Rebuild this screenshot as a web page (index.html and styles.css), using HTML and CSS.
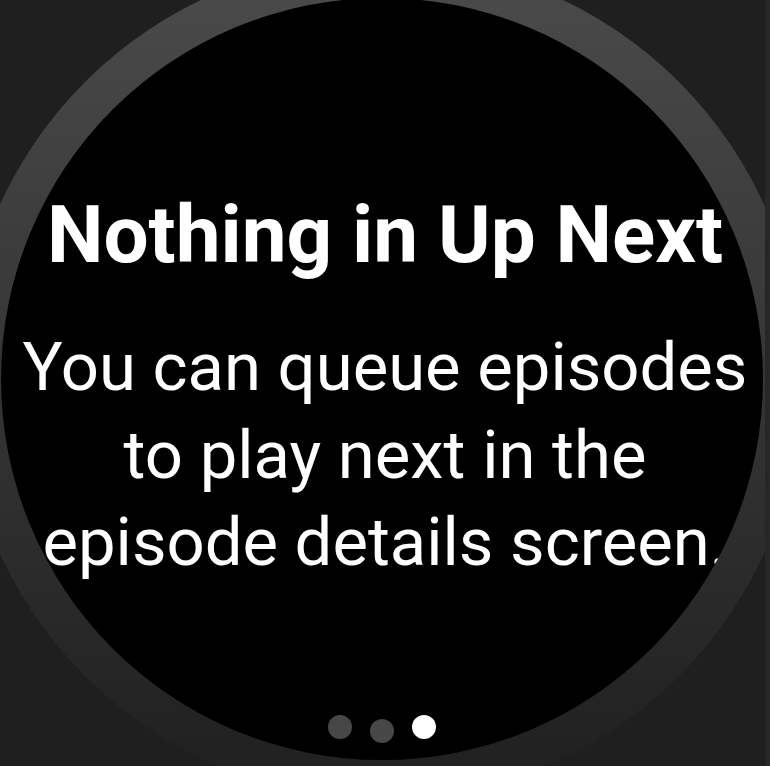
FILE: index.html
```html
<!DOCTYPE html>
<html lang="en">
<head>
<meta charset="utf-8">
<title>Up Next</title>
<link rel="stylesheet" href="styles.css">
</head>
<body>
<div class="stage">
  <div class="bezel">
    <div class="screen">
      <h1 class="title">Nothing in Up Next</h1>
      <p class="message">You can queue episodes<br>to play next in the<br>episode details screen.</p>
      <div class="pager">
        <span class="dot"></span>
        <span class="dot dot-mid"></span>
        <span class="dot dot-active"></span>
      </div>
    </div>
  </div>
</div>
</body>
</html>
```
FILE: styles.css
```css
html, body {
  margin: 0;
  padding: 0;
  background: #1f1f1f;
}
body {
  width: 770px;
  height: 766px;
  overflow: hidden;
  font-family: Roboto, "Noto Sans", "Liberation Sans", sans-serif;
}
.stage {
  width: 770px;
  height: 766px;
  box-sizing: border-box;
  border-right: 5px solid #272727;
  overflow: hidden;
  display: flex;
  align-items: flex-start;
}
.bezel {
  flex-shrink: 0;
  width: 840px;
  height: 840px;
  margin: -41px 0 0 -38px;
  padding: 39px;
  box-sizing: border-box;
  border-radius: 50%;
  background: linear-gradient(to bottom, #4b4b4b 0%, #1f1f1f 100%);
}
.screen {
  width: 762px;
  height: 762px;
  border-radius: 50%;
  background: #000;
  overflow: hidden;
  display: flex;
  flex-direction: column;
  align-items: center;
  box-sizing: border-box;
  padding: 197px 0 17px 6px;
  color: #fff;
  text-align: center;
}
.title {
  margin: 0;
  font-size: 80px;
  line-height: 80px;
  font-weight: 700;
  white-space: nowrap;
}
.message {
  margin: 49px 0 0;
  font-size: 67px;
  line-height: 87.5px;
  font-weight: 400;
  white-space: nowrap;
}
.pager {
  margin-top: auto;
  display: flex;
  align-items: flex-start;
  gap: 18px;
  padding-right: 6px;
  height: 28px;
}
.dot {
  width: 24px;
  height: 24px;
  border-radius: 50%;
  background: #474747;
}
.dot-mid {
  margin-top: 4px;
}
.dot-active {
  background: #fff;
}
```
